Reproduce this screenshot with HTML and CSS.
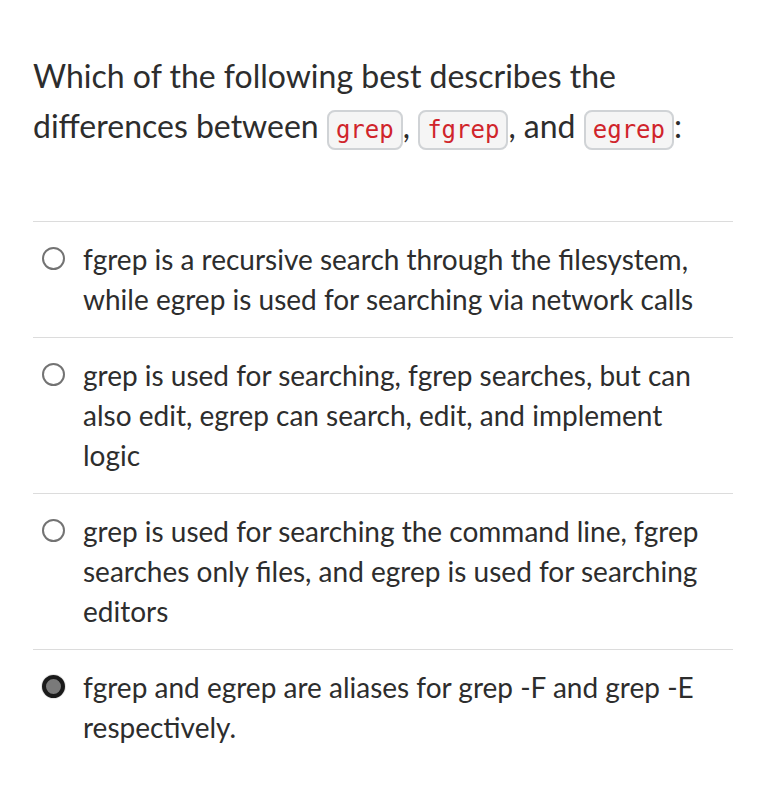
FILE: index.html
```html
<!DOCTYPE html>
<html>
<head>
<meta charset="utf-8">
<link rel="stylesheet" href="styles.css">
</head>
<body>
<div class="quiz">
  <p class="question">Which of the following best describes the differences between <code class="chip">grep</code>, <code class="chip">fgrep</code>, and <code class="chip">egrep</code>:</p>
  <ul class="options">
    <li class="option"><span class="radio"></span><span class="label">fgrep is a recursive search through the filesystem, while egrep is used for searching via network calls</span></li>
    <li class="option"><span class="radio"></span><span class="label">grep is used for searching, fgrep searches, but can also edit, egrep can search, edit, and implement logic</span></li>
    <li class="option"><span class="radio"></span><span class="label">grep is used for searching the command line, fgrep searches only files, and egrep is used for searching editors</span></li>
    <li class="option"><span class="radio checked"></span><span class="label">fgrep and egrep are aliases for grep -F and grep -E respectively.</span></li>
  </ul>
</div>
</body>
</html>
```
FILE: styles.css
```css
html, body {
  margin: 0;
  padding: 0;
  background: #fff;
}
.quiz {
  padding: 51px 31px 0 33px;
  font-family: Lato, "Noto Sans", sans-serif;
  color: #2d2d2d;
}
.question {
  margin: 0 0 66px 0;
  font-size: 32px;
  line-height: 50px;
}
.chip {
  font-family: "DejaVu Sans Mono", monospace;
  font-size: 24px;
  color: #d0242b;
  background: #f5f5f5;
  border: 2px solid #d0d3d6;
  border-radius: 8px;
  padding: 4px 7px;
}
.options {
  list-style: none;
  margin: 0;
  padding: 0;
}
.option {
  display: flex;
  align-items: flex-start;
  gap: 18px;
  border-top: 1px solid #dcdcdc;
  padding: 17px 22px 18px 9px;
  font-size: 28px;
  line-height: 40px;
}
.radio {
  flex: none;
  box-sizing: border-box;
  width: 23px;
  height: 23px;
  margin-top: 8px;
  border: 2px solid #737373;
  border-radius: 50%;
  background: #fff;
}
.radio.checked {
  border: 4px solid #1a1a1a;
  background: #7a7a7a;
  box-shadow: 0 0 0 1px #e6e6e6;
}
.label {
  flex: 1;
}
```
